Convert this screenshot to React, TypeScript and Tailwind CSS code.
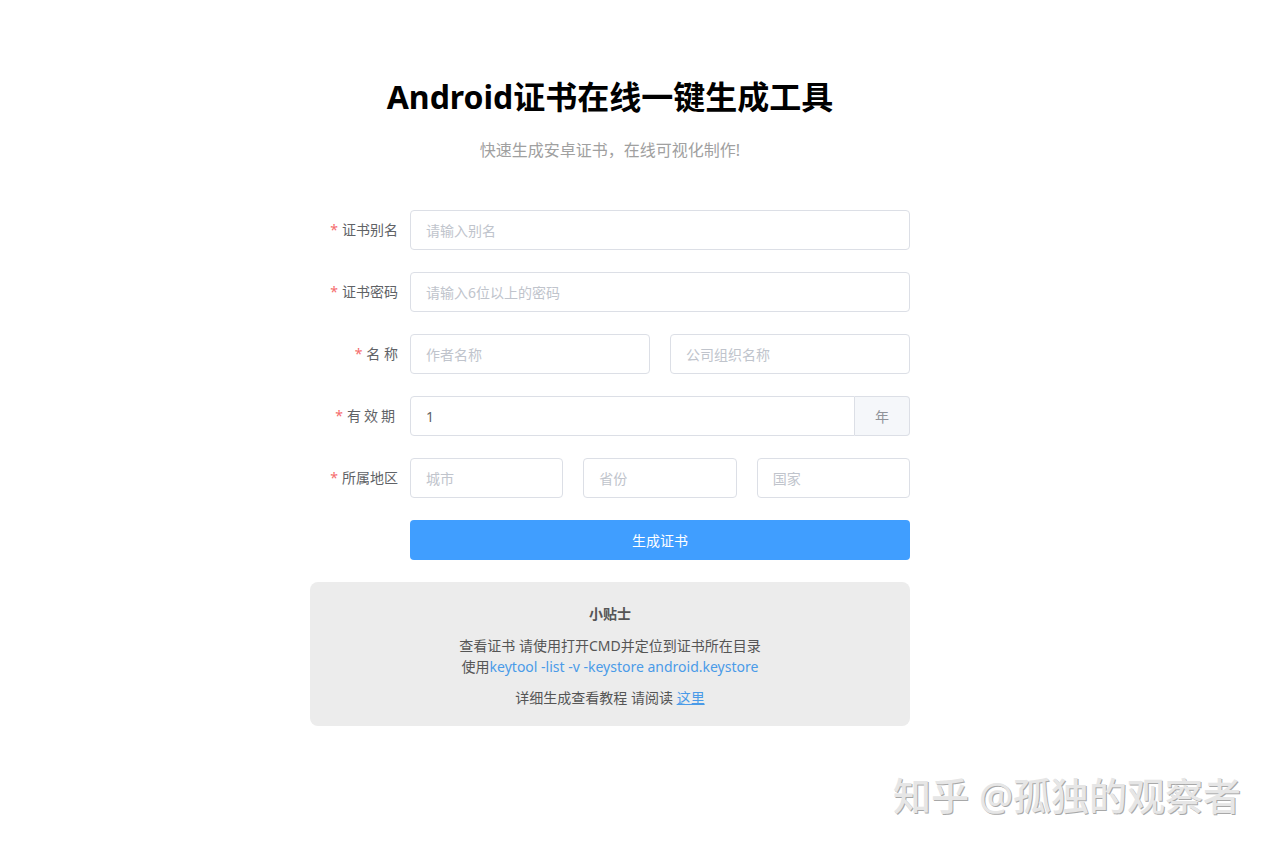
import React from "react";

const font = "font-['Noto_Sans','Noto_Sans_CJK_SC',sans-serif]";

function Label({ text }: { text: React.ReactNode }) {
  return (
    <div className="w-[100px] shrink-0 pr-[12px] text-right text-[14px] text-[#606266] leading-[40px]">
      <span className="text-[#f56c6c] mr-[4px]">*</span>
      {text}
    </div>
  );
}

function Input({ placeholder, value, className = "" }: { placeholder?: string; value?: string; className?: string }) {
  return (
    <div
      className={`h-[40px] border border-[#dcdfe6] rounded-[4px] px-[15px] flex items-center text-[14px] ${
        value ? "text-[#606266]" : "text-[#c0c4cc]"
      } ${className}`}
    >
      {value ?? placeholder}
    </div>
  );
}

export default function App() {
  return (
    <div className={`${font} bg-white min-h-[844px] w-[1275px] relative`}>
      <div className="ml-[310px] w-[600px] pt-[74px] flex flex-col">
        <h1 className="text-center text-[32px] font-bold text-black leading-[46px]">
          Android证书在线一键生成工具
        </h1>
        <p className="text-center text-[16px] text-[#a0a0a0] mt-[19px] leading-[22px]">
          快速生成安卓证书，在线可视化制作!
        </p>

        <div className="mt-[49px] flex flex-col gap-[22px]">
          <div className="flex">
            <Label text="证书别名" />
            <Input placeholder="请输入别名" className="flex-1" />
          </div>
          <div className="flex">
            <Label text="证书密码" />
            <Input placeholder="请输入6位以上的密码" className="flex-1" />
          </div>
          <div className="flex">
            <Label text="名 称" />
            <div className="flex-1 flex gap-[20px]">
              <Input placeholder="作者名称" className="flex-1" />
              <Input placeholder="公司组织名称" className="flex-1" />
            </div>
          </div>
          <div className="flex">
            <Label text={<span className="tracking-[3px]">有效期</span>} />
            <div className="flex-1 flex">
              <Input value="1" className="flex-1 rounded-r-none" />
              <div className="w-[55px] h-[40px] border border-l-0 border-[#dcdfe6] rounded-r-[4px] bg-[#f5f7fa] text-[#909399] text-[14px] flex items-center justify-center">
                年
              </div>
            </div>
          </div>
          <div className="flex">
            <Label text="所属地区" />
            <div className="flex-1 flex gap-[20px]">
              <Input placeholder="城市" className="flex-1" />
              <Input placeholder="省份" className="flex-1" />
              <Input placeholder="国家" className="flex-1" />
            </div>
          </div>
          <div className="flex">
            <div className="w-[100px] shrink-0" />
            <button className="flex-1 h-[40px] rounded-[4px] bg-[#409eff] text-white text-[14px]">
              生成证书
            </button>
          </div>
        </div>

        <div className="mt-[22px] bg-[#ececec] rounded-[8px] pt-[22px] pb-[18px] flex flex-col items-center text-[14px] text-[#555]">
          <div className="font-bold leading-[20px]">小贴士</div>
          <div className="mt-[11px] leading-[21px] text-center">
            <div>查看证书 请使用打开CMD并定位到证书所在目录</div>
            <div>
              使用<span className="text-[#4a9be8]">keytool -list -v -keystore android.keystore</span>
            </div>
          </div>
          <div className="mt-[10px] leading-[21px]">
            详细生成查看教程 请阅读 <span className="text-[#4a9be8] underline">这里</span>
          </div>
        </div>
      </div>

      <div className="absolute left-[893px] top-[770px] text-[38px] font-medium leading-[50px] text-[#e6e6e6] [text-shadow:1px_1px_0_#a8a8a8]">
        知乎 @孤独的观察者
      </div>
    </div>
  );
}
